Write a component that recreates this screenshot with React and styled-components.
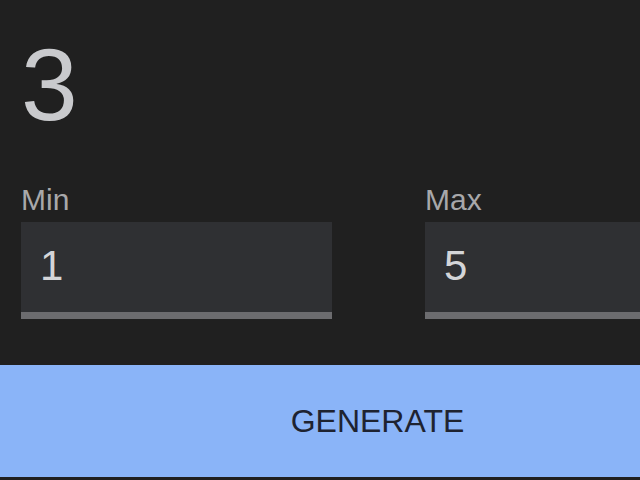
import React from "react";
import styled, { createGlobalStyle } from "styled-components";

const Global = createGlobalStyle`
  html, body {
    margin: 0;
    padding: 0;
    background: #202020;
    overflow: hidden;
  }
  body {
    font-family: "Liberation Sans", Arial, sans-serif;
  }
`;

const Viewport = styled.div`
  width: 100vw;
  height: 100vh;
  overflow: hidden;
  background: #202020;
`;

const Page = styled.div`
  width: 755px;
  height: 480px;
  display: flex;
  flex-direction: column;
`;

const Result = styled.div`
  font-size: 102px;
  line-height: 1;
  color: #c9cacd;
  padding: 34px 0 0 21px;
  height: 102px;
`;

const Fields = styled.div`
  display: grid;
  grid-template-columns: 311px 311px;
  column-gap: 93px;
  padding: 49px 0 0 21px;
`;

const Field = styled.div`
  display: flex;
  flex-direction: column;
  gap: 7px;
`;

const Label = styled.label`
  font-size: 30px;
  line-height: 30px;
  color: #a8a8aa;
`;

const Input = styled.input`
  box-sizing: border-box;
  width: 311px;
  height: 97px;
  border: none;
  border-bottom: 7px solid #6c6c6f;
  background: #2f3033;
  color: #d4d5d8;
  font-family: "Liberation Sans", Arial, sans-serif;
  font-size: 42px;
  padding: 0 0 3px 19px;
  outline: none;
  margin: 0;
`;

const Button = styled.button`
  margin-top: 46px;
  width: 755px;
  height: 112px;
  border: none;
  background: #8ab4f8;
  color: #1e2331;
  font-family: "Liberation Sans", Arial, sans-serif;
  font-size: 32px;
  padding: 0;
  cursor: pointer;
`;

export default function App() {
  return (
    <Viewport>
      <Global />
      <Page>
        <Result>3</Result>
        <Fields>
          <Field>
            <Label>Min</Label>
            <Input defaultValue="1" />
          </Field>
          <Field>
            <Label>Max</Label>
            <Input defaultValue="5" />
          </Field>
        </Fields>
        <Button>GENERATE</Button>
      </Page>
    </Viewport>
  );
}
